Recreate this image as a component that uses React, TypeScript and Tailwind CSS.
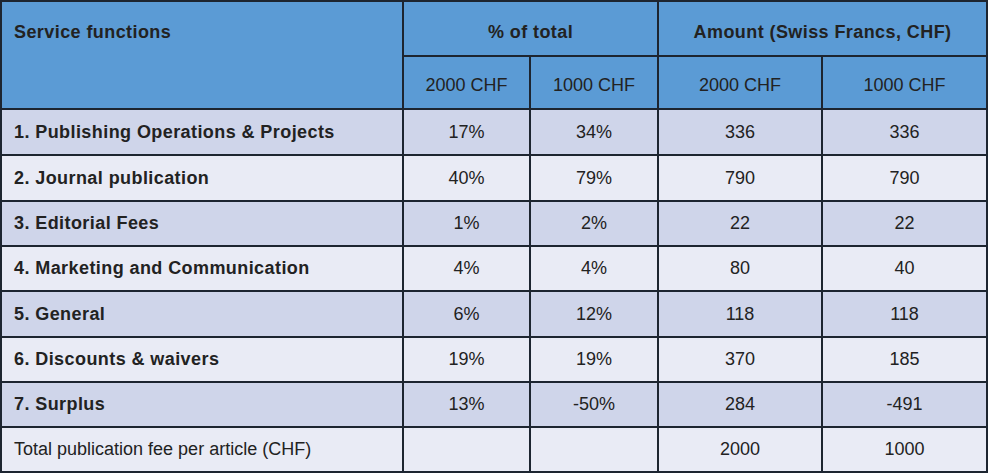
import React from "react";

type Row = { label: string; bold: boolean; p2000: string; p1000: string; a2000: string; a1000: string };

const rows: Row[] = [
  { label: "1. Publishing Operations & Projects", bold: true, p2000: "17%", p1000: "34%", a2000: "336", a1000: "336" },
  { label: "2. Journal publication", bold: true, p2000: "40%", p1000: "79%", a2000: "790", a1000: "790" },
  { label: "3. Editorial Fees", bold: true, p2000: "1%", p1000: "2%", a2000: "22", a1000: "22" },
  { label: "4. Marketing and Communication", bold: true, p2000: "4%", p1000: "4%", a2000: "80", a1000: "40" },
  { label: "5. General", bold: true, p2000: "6%", p1000: "12%", a2000: "118", a1000: "118" },
  { label: "6. Discounts & waivers", bold: true, p2000: "19%", p1000: "19%", a2000: "370", a1000: "185" },
  { label: "7. Surplus", bold: true, p2000: "13%", p1000: "-50%", a2000: "284", a1000: "-491" },
  { label: "Total publication fee per article (CHF)", bold: false, p2000: "", p1000: "", a2000: "2000", a1000: "1000" },
];

const heights = ["h-[46px]", "h-[46px]", "h-[45px]", "h-[45px]", "h-[46px]", "h-[45px]", "h-[45px]", "h-[45px]"];

const cell = "border-2 border-[#1d2530] text-center align-middle";

export default function App() {
  return (
    <div className="bg-white w-[988px] h-[475px] font-['Liberation_Sans',Arial,sans-serif] text-[18px] text-[#222]">
      <table className="table-fixed border-collapse w-[986px]">
        <colgroup>
          <col className="w-[402px]" />
          <col className="w-[127px]" />
          <col className="w-[128px]" />
          <col className="w-[164px]" />
          <col className="w-[165px]" />
        </colgroup>
        <thead className="bg-[#5b9bd5]">
          <tr className="h-[55px]">
            <th rowSpan={2} className="border-2 border-[#1d2530] text-left align-top font-bold tracking-[0.42px] px-3 pt-[17px]">
              Service functions
            </th>
            <th colSpan={2} className={`${cell} font-bold tracking-[0.42px] pt-[7px]`}>% of total</th>
            <th colSpan={2} className={`${cell} font-bold tracking-[0.42px] pt-[7px]`}>Amount (Swiss Francs, CHF)</th>
          </tr>
          <tr className="h-[53px]">
            <th className={`${cell} font-normal pt-[6px]`}>2000 CHF</th>
            <th className={`${cell} font-normal pt-[6px]`}>1000 CHF</th>
            <th className={`${cell} font-normal pt-[6px]`}>2000 CHF</th>
            <th className={`${cell} font-normal pt-[6px]`}>1000 CHF</th>
          </tr>
        </thead>
        <tbody>
          {rows.map((r, i) => (
            <tr key={r.label} className={`${heights[i]} ${i % 2 === 0 ? "bg-[#cfd5ea]" : "bg-[#e9ebf5]"}`}>
              <td
                className={`border-2 border-[#1d2530] px-3 align-middle ${
                  r.bold ? "font-bold tracking-[0.42px]" : "font-normal"
                }`}
              >
                {r.label}
              </td>
              <td className={cell}>{r.p2000}</td>
              <td className={cell}>{r.p1000}</td>
              <td className={cell}>{r.a2000}</td>
              <td className={cell}>{r.a1000}</td>
            </tr>
          ))}
        </tbody>
      </table>
    </div>
  );
}
